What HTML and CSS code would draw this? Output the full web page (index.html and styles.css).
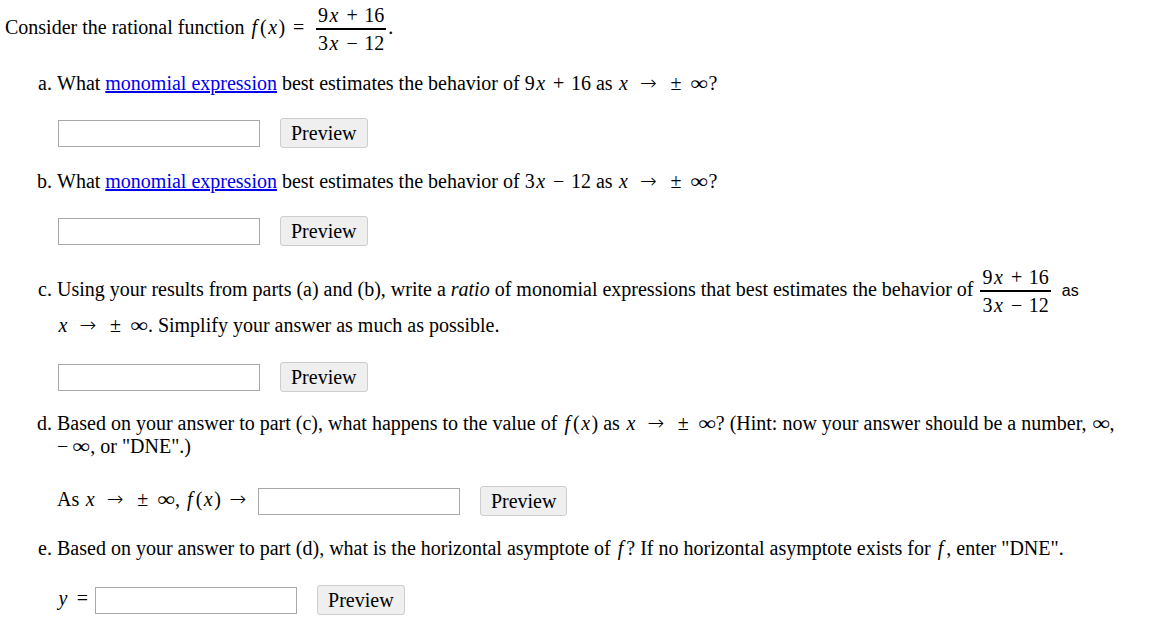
FILE: index.html
```html
<!DOCTYPE html>
<html lang="en">
<head>
    <meta charset="UTF-8">
    <title>Rational function</title>
    <link rel="stylesheet" href="styles.css">
</head>
<body>
    <div class="problem">
        <p class="intro">Consider the rational function <span class="m"><i class="f">f</i>(<i>x</i>)<span class="rel">=</span><span class="frac"><span class="num">9<i>x</i><span class="op">+</span>16</span><span class="den">3<i>x</i><span class="op">&minus;</span>12</span></span></span>.</p>

        <ol class="parts">
            <li>
                <p>What <a href="#">monomial expression</a> best estimates the behavior of <span class="m">9<i>x</i><span class="op">+</span>16</span> as <span class="m"><i>x</i><span class="arr">&rarr;</span><span class="pm">&plusmn;</span><span class="inf">&infin;</span></span>?</p>
                <div class="answer">
                    <input type="text" class="ans">
                    <button class="btn">Preview</button>
                </div>
            </li>
            <li>
                <p>What <a href="#">monomial expression</a> best estimates the behavior of <span class="m">3<i>x</i><span class="op">&minus;</span>12</span> as <span class="m"><i>x</i><span class="arr">&rarr;</span><span class="pm">&plusmn;</span><span class="inf">&infin;</span></span>?</p>
                <div class="answer">
                    <input type="text" class="ans">
                    <button class="btn">Preview</button>
                </div>
            </li>
            <li class="tall">
                <p>Using your results from parts (a) and (b), write a <em>ratio</em> of monomial expressions that best estimates the behavior of <span class="m"><span class="frac inline"><span class="num">9<i>x</i><span class="op">+</span>16</span><span class="den">3<i>x</i><span class="op">&minus;</span>12</span></span></span> <span class="sans">as</span><br><span class="m"><i>x</i><span class="arr">&rarr;</span><span class="pm">&plusmn;</span><span class="inf">&infin;</span></span>. Simplify your answer as much as possible.</p>
                <div class="answer">
                    <input type="text" class="ans">
                    <button class="btn">Preview</button>
                </div>
            </li>
            <li class="two">
                <p>Based on your answer to part (c), what happens to the value of <span class="m"><i class="f">f</i>(<i>x</i>)</span> as <span class="m"><i>x</i><span class="arr">&rarr;</span><span class="pm">&plusmn;</span><span class="inf">&infin;</span></span>? (Hint: now your answer should be a number, <span class="m"><span class="inf">&infin;</span></span>,<br><span class="m"><span class="neg">&minus;</span><span class="inf">&infin;</span></span>, or "DNE".)</p>
                <div class="answer">
                    <span class="lead">As <span class="m"><i>x</i><span class="arr">&rarr;</span><span class="pm">&plusmn;</span><span class="inf">&infin;</span></span>, <span class="m"><i class="f">f</i>(<i>x</i>)<span class="arr short">&rarr;</span></span></span>
                    <input type="text" class="ans">
                    <button class="btn">Preview</button>
                </div>
            </li>
            <li class="last">
                <p>Based on your answer to part (d), what is the horizontal asymptote of <span class="m"><i class="f">f</i></span>? If no horizontal asymptote exists for <span class="m"><i class="f">f</i></span>, enter "DNE".</p>
                <div class="answer">
                    <span class="lead"><span class="m"><i>y</i><span class="rel">=</span></span></span>
                    <input type="text" class="ans">
                    <button class="btn">Preview</button>
                </div>
            </li>
        </ol>
    </div>
</body>
</html>
```

FILE: styles.css
```css
body {
    margin: 0;
    font-family: "Liberation Serif", "Times New Roman", serif;
    font-size: 20px;
    color: #000;
    background-color: #fff;
}
.problem {
    padding: 2px 5px;
}
.intro {
    margin: 0;
    line-height: 50px;
    height: 50px;
}
.parts {
    list-style-type: lower-alpha;
    margin: 20px 0 0 0;
    padding-left: 52px;
}
.parts li {
    margin-bottom: 22px;
}
.parts p {
    margin: 0;
    line-height: 23px;
}
.parts li.tall {
    padding-top: 4px;
    margin-bottom: 20px;
}
.parts li.tall p {
    line-height: 35px;
}
.parts li.two {
    margin-bottom: 21px;
}
.parts a {
    color: #0000ee;
}
.answer {
    display: flex;
    align-items: center;
    margin-top: 23px;
    height: 30px;
}
.tall .answer {
    margin-top: 19px;
}
.two .answer {
    margin-top: 28px;
}
.last .answer {
    margin-top: 25px;
}
.ans {
    width: 202px;
    height: 27px;
    box-sizing: border-box;
    border: 1px solid #a9a9a9;
    padding: 2px 4px;
    font-family: inherit;
    font-size: 16px;
    margin: 0 0 0 1px;
}
.btn {
    margin-left: 20px;
    height: 30px;
    padding: 0 10px;
    font-family: inherit;
    font-size: 20px;
    color: #000;
    background-color: #efefef;
    border: 1px solid #cdcdcd;
    border-radius: 3px;
}
.lead {
    margin-right: 10px;
    margin-bottom: 4px;
}
.last .lead {
    margin-right: 0;
}
.last .lead .rel {
    margin-right: 0.2em;
}
.m {
    white-space: nowrap;
}
.m i {
    font-style: italic;
    padding: 0 1.5px;
}
.m i.f {
    padding: 0 3px 0 2px;
}
.rel {
    display: inline-block;
    width: 0.78em;
    text-align: center;
    margin: 0 0.28em;
}
.op {
    display: inline-block;
    width: 0.78em;
    text-align: center;
    margin: 0 0.22em;
}
.arr {
    display: inline-block;
    width: 0.9em;
    text-align: center;
    font-family: "DejaVu Sans ExtraLight", "DejaVu Sans", sans-serif;
    font-weight: 200;
    font-size: 20px;
    margin: 0 0.65em 0 0.5em;
}
.arr.short {
    margin: 0 0 0 0.4em;
}
.pm {
    margin-right: 0.45em;
}
.neg {
    margin-right: 0.2em;
}
.inf {
    display: inline-block;
    width: 0.9em;
    transform: scaleX(1.25);
    transform-origin: left center;
}
.frac {
    display: inline-flex;
    flex-direction: column;
    align-items: center;
    vertical-align: middle;
    line-height: 24px;
    margin: -1px 2px -1px 4px;
}
.frac.inline {
    margin: -9px 2px -9px 2px;
}
.frac .num {
    padding: 0 2px 1px;
}
.frac .den {
    border-top: 2px solid #000;
    padding: 1px 2px 0;
}
.sans {
    font-family: "Liberation Sans", Arial, sans-serif;
    font-size: 16px;
    margin-left: 4px;
}
```
